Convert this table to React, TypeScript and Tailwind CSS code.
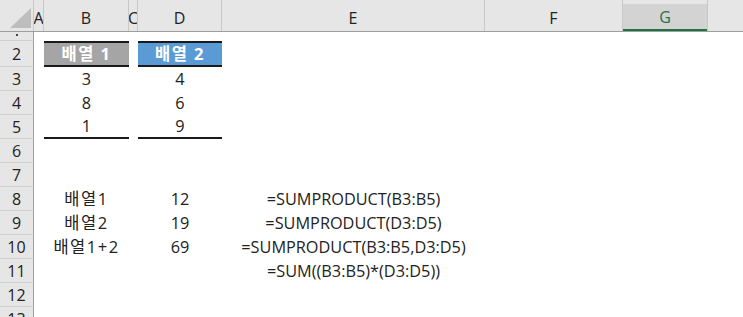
import React from "react";

type Col = { key: string; w: string };

const cols: Col[] = [
  { key: "A", w: "w-[10px]" },
  { key: "B", w: "w-[85px]" },
  { key: "C", w: "w-[9px]" },
  { key: "D", w: "w-[84px]" },
  { key: "E", w: "w-[263px]" },
  { key: "F", w: "w-[138px]" },
  { key: "G", w: "w-[85px]" },
  { key: "H", w: "flex-1" },
];

const font = "font-['Open_Sans','Noto_Sans_CJK_KR',sans-serif]";

// Korean labels render a touch wider than the Latin cells
const Ko = ({ children }: { children: React.ReactNode }) => (
  <span className="tracking-[1.5px] text-[16.5px]">{children}</span>
);

const ColumnHeader = () => (
  <div className="flex h-[32px] bg-[#e6e6e6] border-b border-[#9e9e9e]">
    <div className="relative w-[34px] shrink-0 border-r border-[#c8c8c8]">
      <svg className="absolute left-0 top-0" width="34" height="32" viewBox="0 0 34 32">
        <polygon points="31,8 31,28 10,28" fill="#bdbdbd" />
      </svg>
    </div>
    {cols.map((c) => {
      const selected = c.key === "G";
      return (
        <div
          key={c.key}
          className={`${c.w} shrink-0 overflow-hidden flex flex-col ${c.key === "H" ? "" : "border-r border-[#c8c8c8]"}`}
        >
          <div className="h-[4px]" />
          <div
            className={`flex-1 flex items-center justify-center text-[16px] leading-none ${
              selected ? "bg-[#d3d3d3] text-[#217346] border-b-2 border-[#217346]" : "text-[#222]"
            }`}
          >
            {c.key === "H" ? "" : c.key}
          </div>
        </div>
      );
    })}
  </div>
);

type RowProps = {
  n: number;
  h: string;
  b?: React.ReactNode;
  d?: React.ReactNode;
  e?: React.ReactNode;
  headRow?: boolean;
  lastRow?: boolean;
};

const Row = ({ n, h, b, d, e, headRow, lastRow }: RowProps) => {
  const tableCell = headRow
    ? "border-t-2 border-b-2 border-[#1a1a1a] text-white font-bold"
    : lastRow
    ? "border-b-2 border-[#1a1a1a]"
    : "";
  return (
    <div className={`flex ${h}`}>
      <div className="w-[34px] shrink-0 bg-[#e6e6e6] border-r border-[#9e9e9e] border-b border-b-[#d0d0d0] flex items-center justify-center text-[16px] text-[#222] overflow-hidden">
        {n}
      </div>
      <div className="w-[10px] shrink-0" />
      <div
        className={`w-[85px] shrink-0 flex items-center justify-center whitespace-nowrap ${tableCell} ${
          headRow ? "bg-[#a5a5a5]" : ""
        }`}
      >
        {b}
      </div>
      <div className="w-[9px] shrink-0" />
      <div
        className={`w-[84px] shrink-0 flex items-center justify-center whitespace-nowrap ${tableCell} ${
          headRow ? "bg-[#5b9bd5]" : ""
        }`}
      >
        {d}
      </div>
      <div className="w-[263px] shrink-0 flex items-center justify-center whitespace-nowrap">{e}</div>
      <div className="flex-1" />
    </div>
  );
};

export default function App() {
  return (
    <div className={`w-[743px] h-[317px] overflow-hidden bg-white text-[16.3px] text-[#222] ${font}`}>
      <ColumnHeader />
      <div className="flex h-[9px]">
        <div className="w-[34px] shrink-0 bg-[#e6e6e6] border-r border-[#9e9e9e] border-b border-b-[#d0d0d0] flex justify-center overflow-hidden">
          <span className="block w-[2px] h-[2px] mt-[2px] bg-[#444]" />
        </div>
      </div>
      <Row n={2} h="h-[26px]" headRow b={<Ko>배열 1</Ko>} d={<Ko>배열 2</Ko>} />
      <Row n={3} h="h-[24px]" b="3" d="4" />
      <Row n={4} h="h-[24px]" b="8" d="6" />
      <Row n={5} h="h-[24px]" b="1" d="9" lastRow />
      <Row n={6} h="h-[24px]" />
      <Row n={7} h="h-[24px]" />
      <Row n={8} h="h-[24px]" b={<Ko>배열1</Ko>} d="12" e="=SUMPRODUCT(B3:B5)" />
      <Row n={9} h="h-[24px]" b={<Ko>배열2</Ko>} d="19" e="=SUMPRODUCT(D3:D5)" />
      <Row n={10} h="h-[24px]" b={<Ko>배열1+2</Ko>} d="69" e="=SUMPRODUCT(B3:B5,D3:D5)" />
      <Row n={11} h="h-[24px]" e="=SUM((B3:B5)*(D3:D5))" />
      <Row n={12} h="h-[24px]" />
      <Row n={13} h="h-[24px]" />
    </div>
  );
}
